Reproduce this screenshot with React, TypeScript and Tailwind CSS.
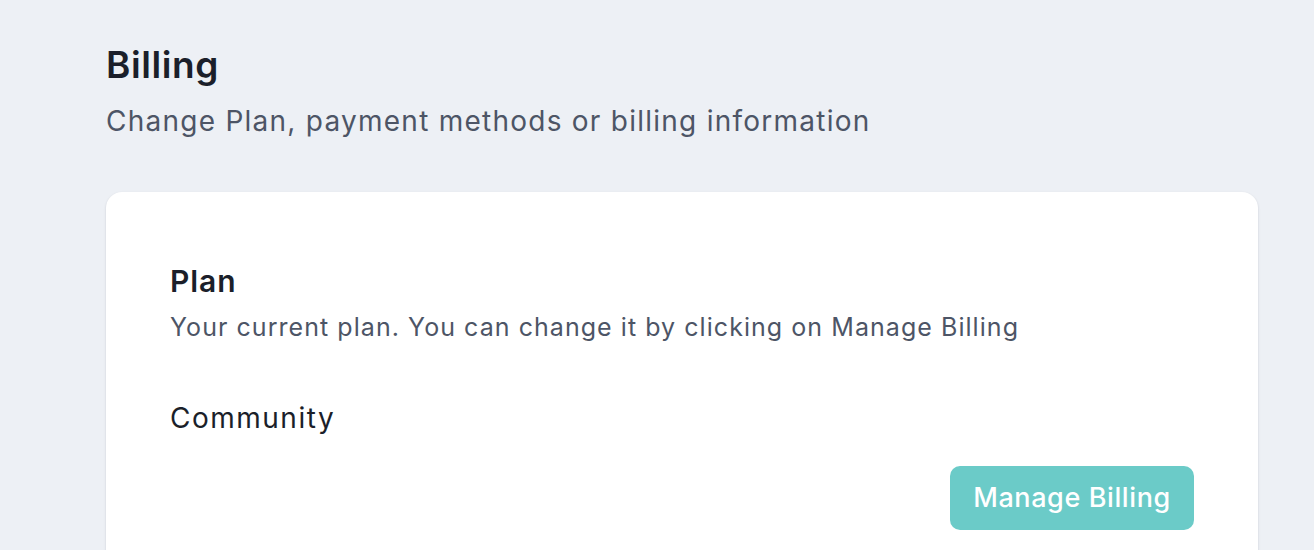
import React from 'react';

export default function App() {
  return (
    <div
      className="h-[550px] w-full overflow-hidden bg-[#edf0f5] px-[106px] pt-[41px]"
      style={{ fontFamily: 'Inter, "Noto Sans", sans-serif' }}
    >
      {/* Page header */}
      <h1 className="text-[37px] font-semibold leading-[48px] tracking-[0.6px] text-[#1b1f2a]">Billing</h1>
      <p className="mt-[12px] text-[28px] leading-[40px] tracking-[1.25px] text-[#4d5566]">
        Change Plan, payment methods or billing information
      </p>

      {/* Plan card */}
      <div className="mt-[51px] w-[1152px] rounded-[16px] bg-white shadow-[0_1px_3px_rgba(16,24,40,0.1),0_1px_2px_rgba(16,24,40,0.06)] px-[64px] pt-[70px] pb-[60px]">
        <h2 className="text-[30px] font-semibold leading-[38px] tracking-[0.9px] text-[#1b1f2a]">Plan</h2>
        <p className="mt-[11px] text-[25px] leading-[32px] tracking-[1.05px] text-[#4d5566]">
          Your current plan. You can change it by clicking on Manage Billing
        </p>
        <div className="mt-[57px] text-[28px] leading-[36px] tracking-[1.5px] text-[#1b1f2a]">Community</div>
        <div className="mt-[30px] flex justify-end">
          <button className="h-[64px] w-[244px] rounded-[10px] bg-[#6bcbc8] text-[27px] font-medium tracking-[0.6px] text-white">
            Manage Billing
          </button>
        </div>
      </div>
    </div>
  );
}
